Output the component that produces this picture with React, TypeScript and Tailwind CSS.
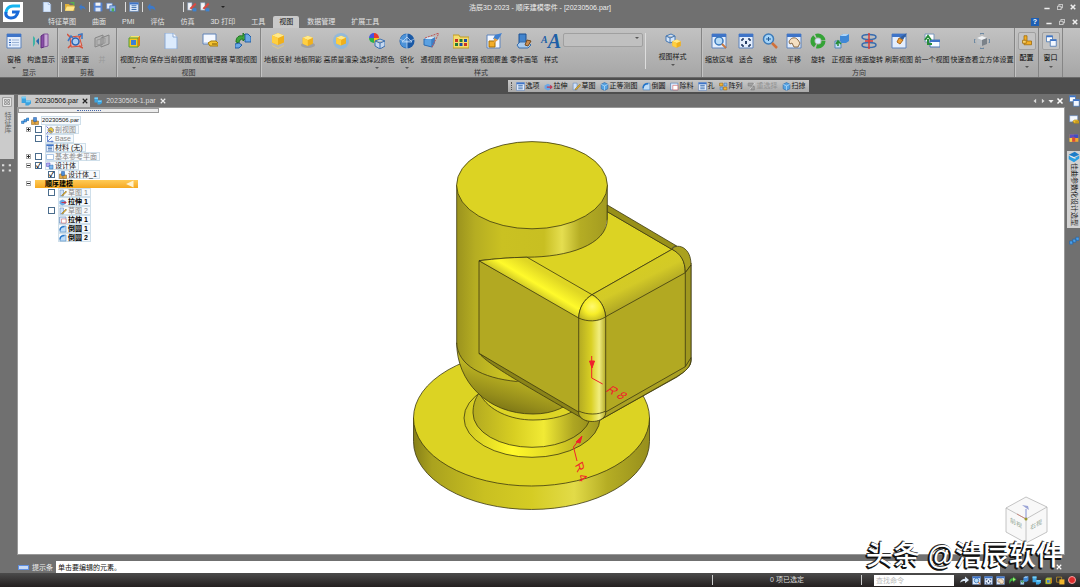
import { useState } from 'react'
import type { ReactNode } from 'react'

const Svg = ({ children, className = 'size-4' }: { children: ReactNode; className?: string }) => (
  <svg className={`${className} shrink-0`} viewBox="0 0 16 16" fill="none" aria-hidden="true">
    {children}
  </svg>
)

const Win = ({ children }: { children?: ReactNode }) => (
  <>
    <path d="M1 1h14v14H1z" fill="#e4eefc" stroke="#5d83bd" />
    <path d="M1 1h14v3H1z" fill="#3e74c8" />
    {children}
  </>
)

const Gold = () => (
  <>
    <path d="M8 2l6 2.500v7L8 14l-6-2.500v-7z" fill="#f0b01c" />
    <path d="M8 2l6 2.500L8 7 2 4.500z" fill="#ffe98a" />
    <path d="M2 4.500L8 7v7l-6-2.500z" fill="#ffcf40" />
  </>
)

const art: Record<string, ReactNode> = {
  pane: <Win><path d="M3 7h2M3 9.500h2M3 12h2" stroke="#2f62b5" /><path d="M6 7h7M6 9.500h7M6 12h7" stroke="#9db4d6" /></Win>,
  structure: <><path d="M0 3l2 2v6l-2 3z" fill="#41b4a5" /><path d="M3 8l3-3v7z" fill="#2a67ad" /><path d="M8 3l3-2v13l-3 1z" fill="#8a4ba8" stroke="#5d2c7b" /><path d="M11 1h4v12l-4 1z" fill="#c9a8d8" stroke="#81539a" /></>,
  plane: <><path d="M3 4l9-1 3 10-11 1z" fill="#eab0a4" stroke="#d4513c" /><path d="M0 1l4 4M15 1l-3 4M1 15l3-3M16 15l-4-2" stroke="#d4513c" strokeWidth="1.500" /><circle cx="8.500" cy="8.500" r="3.500" fill="#a9ccf2" stroke="#2864b4" strokeWidth="1.500" /><path d="M1 8l3-5 2 2M11 2l4-1v5" stroke="#3a79c6" strokeWidth="1.500" /></>,
  clip: <><path d="M1 5l8-3v9l-8 3zM7 5l8-3v9l-8 3z" fill="#b5b5b5" stroke="#858585" /><path d="M3 7l8-2v5l-8 2z" stroke="#999" /></>,
  orient: <><path d="M3 5l2-2h9v9l-2 2H3z" fill="#4b8b35" /><path d="M3 5l2-2h9l-2 2z" fill="#f7e46a" /><path d="M3 5h9v9H3z" fill="#f9c61f" stroke="#4e9c3b" /><path d="M5 7h5v5H5z" fill="#3c80d8" /><path d="M12 5l2-2v9l-2 2z" fill="#dd7d16" /></>,
  save: <><path d="M2 0h8l4 4v12H2z" fill="#dcebfd" stroke="#8aa9d4" /><path d="M10 0v4h4" fill="#fff" stroke="#8aa9d4" /></>,
  manager: <><path d="M1 1h13v10H1z" fill="#f4f8ff" stroke="#5f82b8" /><path d="M2 10h11" stroke="#a6bfe5" /><path d="M6 10l3-2h5l2 2v3H8z" fill="#f4c432" stroke="#a57a0c" /><path d="M10 11h5" stroke="#7a5708" /></>,
  sketch: <><path d="M1 9c0-5 3-7 7-6V0l4 4-4 4V6C6 6 4 7 4 10z" fill="#3ea53b" stroke="#1e7423" /><path d="M0 11l4-1 3 2-3 3H0zM10 1h3l3 3v5h-6z" fill="#6aa8e6" stroke="#235fa5" /></>,
  reflect: <><g transform="translate(0 -2)"><Gold /></g><path d="M2 12l6 3 6-3v1l-6 3-6-3z" fill="#e9cf7c" opacity=".7" /></>,
  shadow: <><ellipse cx="8" cy="12" rx="7" ry="3" fill="#8f8f8f" opacity=".6" /><g transform="translate(1 1) scale(.85)"><Gold /></g></>,
  render: <><circle cx="8" cy="8" r="8" fill="#80b7e5" opacity=".7" /><g transform="translate(1.500 1) scale(.82)"><Gold /></g></>,
  edge: <><path d="M5 5A5 5 0 0 1 5 0z" fill="#4452e0" /><path d="M5 5V0A5 5 0 0 1 10 5z" fill="#e83a2d" /><path d="M5 5H0A5 5 0 0 1 5 0z" fill="#4452e0" /><path d="M5 5h5A5 5 0 0 1 5 10z" fill="#f4c322" /><path d="M5 5v5A5 5 0 0 1 0 5z" fill="#2bb44a" /><path d="M6 8l5-2 5 2v5l-5 3-5-3zM6 8l5 2 5-2M11 10v6" fill="#c5d7ee" stroke="#3b6fb0" /></>,
  sharpen: <><circle cx="8" cy="8" r="7.500" fill="#1b5aa6" /><path d="M8 1a7 7 0 0 0 0 14z" fill="#4d93d8" /><path d="M8 0v16M1 6c4 3 10 3 14 0M8 4L3 9h10z" stroke="#cfe3f9" strokeWidth=".7" /></>,
  perspective: <><path d="M1 6l8-1v9l-8-2z" fill="#5ba1e2" stroke="#2e6cb1" /><path d="M1 6l4-2h7l-3 2z" fill="#cfe6fb" /><path d="M9 6l3-2v6l-3 5z" fill="#3d7dc4" /><path d="M2 5L16 0M9 14L16 0" stroke="#bf5555" strokeDasharray="2 1" /></>,
  colors: <><path d="M0 2h6l1 2h9v11H0z" fill="#f6dd6c" stroke="#c09c22" /><path d="M2 6h3v3H2zM11 10h3v3h-3z" fill="#c93224" /><path d="M6.500 6h3v3h-3zM2 10h3v3H2z" fill="#247b33" /><path d="M11 6h3v3h-3zM6.500 10h3v3h-3z" fill="#1e4ca0" /></>,
  override: <><path d="M1 2h13v13H1z" fill="#f4f8ff" stroke="#5d83bd" /><path d="M3 8h6v6H3z" fill="#f3ae29" stroke="#a36f0a" /><path d="M16 0l-4 7-5-1 2-4z" fill="#3e7fd0" /><path d="M8 5l4 2-4 3z" fill="#e7a03c" /></>,
  painter: <><path d="M3 1h7v9H3z" fill="#4284cd" stroke="#1d5092" /><path d="M1 12l3-3h8l3 3-3 3H3z" fill="#a9cbef" stroke="#396fac" /><path d="M11 7l4 1-3 5-3-1z" fill="#c98e55" stroke="#744b20" /></>,
  zoomArea: <Win><circle cx="8" cy="8" r="4" fill="#b7dbf7" stroke="#3977bb" strokeWidth="1.500" /><path d="M11 11l4 4" stroke="#c87942" strokeWidth="2" /></Win>,
  fit: <Win><path d="M4 6h2M4 6v2M12 6h-2M12 6v2M4 13h2M4 13v-2M12 13h-2M12 13v-2" stroke="#243c66" strokeWidth="1.500" /><path d="M7 8h2v3H7z" fill="#243c66" /></Win>,
  zoom: <><circle cx="6.500" cy="6" r="5" fill="#a4d3f7" stroke="#3c7bb9" strokeWidth="1.500" /><path d="M4 6h5M6.500 4v4" stroke="#225a95" /><path d="M10 10l5 5" stroke="#d0703a" strokeWidth="2.500" /></>,
  pan: <Win><path d="M3 9c1-4 6-6 9-2l2 3-2 4H8l-2-4-2 1z" fill="#f4dfc2" stroke="#8a6a47" /></Win>,
  rotate: <><circle cx="8" cy="8" r="5.500" stroke="#34a336" strokeWidth="4" strokeDasharray="10 1.500" /><circle cx="8" cy="8" r="2.500" fill="#d7e8f8" /></>,
  front: <><path d="M6 3l3-2h6v7l-3 2H6z" fill="#3f88d6" /><path d="M6 3l3-2h6l-3 2z" fill="#add4f8" /><path d="M1 8h6v7H1z" fill="#c5def6" stroke="#5387bb" /><path d="M4 13V9M2 11l2-3 3 3" stroke="#238b35" strokeWidth="1.500" /></>,
  spin: <><ellipse cx="8" cy="4" rx="7" ry="2.500" stroke="#396cae" strokeWidth="1.500" /><ellipse cx="8" cy="12" rx="7" ry="2.500" stroke="#396cae" strokeWidth="1.500" /><path d="M8 0v16M4 8h8" stroke="#d93d3a" strokeWidth="1.500" /></>,
  refresh: <Win><path d="M16 0l-4 7-4-2z" fill="#325f9f" /><path d="M8 5l4 2-3 4-3-2z" fill="#efa43b" stroke="#a9661a" /></Win>,
  previous: <><path d="M1 1h9v8H1z" fill="#fff" stroke="#7896bb" /><path d="M6 7h10v7H6z" fill="#f6faff" stroke="#4b76b3" /><path d="M6 7h10v2H6z" fill="#3e74c8" /><path d="M8 11H4V6M1 7l3-4 3 4" stroke="#268c3a" strokeWidth="2" /></>,
  quick: <><path d="M3 5l5-2 5 2v6l-5 2-5-2z" fill="#b9bec3" /><path d="M3 5l5-2 5 2-5 2z" fill="#f0f2f4" /><path d="M8 7l5-2v6l-5 2z" fill="#7b8289" /><path d="M6 1l2-1 2 1M6 15l2 1 2-1M1 6L0 8l1 2M15 6l1 2-1 2" stroke="#557a9b" /></>,
  viewStyle: <><path d="M1 3l5-2 4 2v5l-5 2-4-2zM1 3l4 2 5-2M5 5v5" fill="#d3e5fa" stroke="#4577b2" /><g transform="translate(6 5) scale(.7)"><Gold /></g></>,
  config: <><path d="M4 1h4v7h6v5H4z" fill="#f4ae24" stroke="#9b6809" /><path d="M2 7h5v4H2z" fill="#fbd165" stroke="#9b6809" /></>,
  window: <><path d="M2 1h8v8H2z" fill="#fff" stroke="#3f6fae" /><path d="M7 6h8v9H7z" fill="#f2f7ff" stroke="#3f6fae" /><path d="M2 1h8v2H2zM7 6h8v2H7z" fill="#3e74c8" /></>,
  part: <><path d="M1 1h7v6h8v5l-4 3H7v-4H1z" fill="#3ba3e0" /><path d="M1 1h7v3H1zM8 7h8l-2 3H8z" fill="#77cdf5" /></>,
  folder: <><path d="M0 3h6l2 2h7v9H0z" fill="#e0b13a" /><path d="M3 7h13l-3 7H0z" fill="#ffe58a" /><path d="M9 1h5v4" stroke="#55b24b" strokeWidth="2" /></>,
  disk: <><path d="M1 1h14v14H1z" fill="#5582d0" /><path d="M4 1h8v5H4z" fill="#f4f4f4" /><path d="M4 9h8v6H4z" fill="#dde7f6" /></>,
  disks: <><path d="M1 2h9v9H1z" fill="#e9eef6" stroke="#5582d0" /><path d="M6 6h9v9H6z" fill="#8fb4e6" stroke="#3a66ad" /><path d="M9 10h4v5H9z" fill="#4fae52" /></>,
  list: <Win><path d="M4 6h8M4 9h8M4 12h8" stroke="#3569ac" strokeWidth="1.500" /></Win>,
  undo: <path d="M2 8l5-6v4c6 0 8 3 8 8-2-3-4-4-8-3v4z" fill="#3c79c9" />,
  tool: <><path d="M1 1h7v12H1z" fill="#f5f7fa" stroke="#7f95b2" /><path d="M4 10l9-9 2 3-8 8z" fill="#d84a43" /><path d="M9 10h6v5H9z" fill="#3c82d0" /></>,
  solid: <><path d="M2 4l6-3 6 3v8l-6 3-6-3z" fill="#55a3e2" stroke="#2562a5" /><path d="M2 4l6 3 6-3M8 7v8" stroke="#d7ecff" /></>,
  round: <><path d="M2 14V9c0-4 3-7 8-7h4v12z" fill="#bedcf7" stroke="#3b78b7" /><path d="M2 11c0-5 4-8 9-8" stroke="#1f72c9" strokeWidth="2.500" /></>,
  extrude: <><path d="M1 6l6-3 6 3v6l-6 3-6-3z" fill="#6aa8e6" /><path d="M5 9h9M11 6l3 3-3 3" stroke="#c33650" strokeWidth="2" /></>,
  pencil: <><path d="M2 2h7v12H2z" fill="#cfe2fb" stroke="#5b82b5" /><path d="M5 13l9-9 1 2-8 8z" fill="#e9b52f" stroke="#83631a" /></>,
  section: <><path d="M1 1l4 4M1 15l4-4" stroke="#7a6fd0" strokeWidth="2" /><path d="M4 6l6-4 5 4v5l-5 4-6-4z" fill="#e5c53a" stroke="#5a69b0" /><path d="M6 8l6 4" stroke="#5a69b0" strokeWidth="2" /></>,
  cut: <><path d="M1 2h13v12H1z" fill="#dbe9fb" stroke="#4571aa" /><path d="M5 6h9v8H5z" fill="#fff" stroke="#d35555" /></>,
  pattern: <><path d="M1 2h6v5H1zM8 9h6v5H8z" fill="#f1b337" stroke="#956410" /><path d="M9 2h5v5H9zM2 9h4v5H2z" fill="#8fbdec" stroke="#3f72ad" /></>,
  copies: <><path d="M1 2h9v9H1z" fill="#333" stroke="#f0b52b" /><path d="M6 6h9v9H6z" fill="#f0b52b" /></>,
  blocks: <><path d="M1 8h5v5H1zM6 5h5v5H6zM11 2h5v5h-5z" fill="#4da0e6" stroke="#1f62a8" /></>,
  grey: <><path d="M2 2h9v5H2zM7 8h6v6H7z" fill="#a0a0a0" stroke="#777" /><path d="M14 2l-9 11" stroke="#eee" /></>,
  arrow: <path d="M0 12c1-5 5-7 9-7V1l7 6-7 6V9C5 9 2 10 0 12z" fill="#dce9f8" />,
  green: <><path d="M3 14C1 7 5 3 9 4V1l6 5-6 5V8C6 8 4 10 3 14z" fill="#3cb240" /><path d="M9 3v6l4-3z" fill="#b8ec76" /></>,
  swatch: <><path d="M1 2h14v12H1z" fill="#f0a830" /><path d="M1 2h7v6H1z" fill="#5d50bf" /><path d="M8 2h7v6H8z" fill="#3f4fc4" /><path d="M4 7h6v7H4z" fill="#db4c3a" /><path d="M1 8h4v6H1z" fill="#f4d04a" /></>,
  swirl: <><path d="M1 5l8-4 6 4-7 3z" fill="#1d7cc8" /><path d="M1 6l7 4 7-4v4l-7 5-7-4z" fill="#2b9fe3" /><path d="M3 7l7 3" stroke="#fff" /></>,
  axes: <path d="M3 1v12h12M3 13L12 4M1 3h4M12 11v4" stroke="#4168c4" strokeWidth="1.500" />,
  refPlane: <path d="M1 3h14v10H1z" fill="#fff" stroke="#90b4dc" strokeWidth="1.500" />,
  bodies: <><path d="M1 2h7v7H1z" fill="#b5b0f0" stroke="#5146bd" /><path d="M6 7l8-1v8H7z" fill="#79b8ee" stroke="#2562a5" /></>,
  body: <><path d="M1 6h6v9H1zM8 8h7v7H8z" fill="#e4a742" stroke="#8d5e13" /><path d="M5 1h6v8H5z" fill="#4f8fd6" stroke="#2556a0" /></>,
}

const Icon = ({ name, className }: { name: string; className?: string }) => <Svg className={className}>{art[name]}</Svg>

const Caret = ({ className = 'text-[#555]' }: { className?: string }) => (
  <svg className={`h-[3px] w-1 ${className}`} viewBox="0 0 4 3" fill="currentColor" aria-hidden="true">
    <path d="M0 0h4L2 2z" />
  </svg>
)

interface Command {
  label: string
  icon: string
  width: string
  menu?: boolean
  off?: boolean
  tight?: boolean
}

const RibbonButton = ({ label, icon, width, menu, off, tight }: Command) => (
  <button className={`flex flex-col items-center ${width}`} disabled={off}>
    {icon === 'style' ? (
      <span className="h-4 font-['Liberation_Serif',serif] text-xl/4 font-bold italic text-[#1d5fa6]">
        <sup className="text-[10px]">A</sup>A
      </span>
    ) : (
      <Icon name={icon} />
    )}
    <span className={`whitespace-nowrap text-[7px]/[8px] ${tight ? 'mt-1' : 'mt-[7px]'} ${off ? 'text-[#999]' : 'text-[#181818]'}`}>{label}</span>
    {menu && <Caret className="mt-[3px] text-[#555]" />}
  </button>
)

const RibbonGroup = ({ title, items, children, pad = 'px-0.5' }: { title: string; items: Command[]; children?: ReactNode; pad?: string }) => (
  <section className={`flex shrink-0 flex-col border-r border-[#858585] shadow-[1px_0_0_#c4c4c4] ${pad}`}>
    <div className="flex h-[41px] items-start pt-[5px]">
      {items.map((item) => (
        <RibbonButton key={item.label} {...item} />
      ))}
      {children}
    </div>
    <h2 className="text-center text-[7px]/[8px] text-[#333]">{title}</h2>
  </section>
)

const display: Command[] = [
  { label: '窗格', icon: 'pane', width: 'w-6', menu: true },
  { label: '构造显示', icon: 'structure', width: 'w-[30px]' },
]
const clipping: Command[] = [
  { label: '设置平面', icon: 'plane', width: 'w-[30px]' },
  { label: '并', icon: 'clip', width: 'w-6', off: true },
]
const views: Command[] = [
  { label: '视图方向', icon: 'orient', width: 'w-[30px]', menu: true },
  { label: '保存当前视图', icon: 'save', width: 'w-[43px]' },
  { label: '视图管理器', icon: 'manager', width: 'w-9' },
  { label: '草图视图', icon: 'sketch', width: 'w-[30px]' },
]
const styles: Command[] = [
  { label: '地板反射', icon: 'reflect', width: 'w-[30px]' },
  { label: '地板阴影', icon: 'shadow', width: 'w-[30px]' },
  { label: '高质量渲染', icon: 'render', width: 'w-9' },
  { label: '选择边颜色', icon: 'edge', width: 'w-9', menu: true },
  { label: '锐化', icon: 'sharpen', width: 'w-6', menu: true },
  { label: '透视图', icon: 'perspective', width: 'w-6' },
  { label: '颜色管理器', icon: 'colors', width: 'w-9' },
  { label: '视图覆盖', icon: 'override', width: 'w-[30px]' },
  { label: '零件画笔', icon: 'painter', width: 'w-[30px]' },
  { label: '样式', icon: 'style', width: 'w-6' },
]
const orientation: Command[] = [
  { label: '缩放区域', icon: 'zoomArea', width: 'w-[30px]' },
  { label: '适合', icon: 'fit', width: 'w-6' },
  { label: '缩放', icon: 'zoom', width: 'w-6' },
  { label: '平移', icon: 'pan', width: 'w-6' },
  { label: '旋转', icon: 'rotate', width: 'w-6' },
  { label: '正视面', icon: 'front', width: 'w-6' },
  { label: '绕面旋转', icon: 'spin', width: 'w-[30px]' },
  { label: '刷新视图', icon: 'refresh', width: 'w-[30px]' },
  { label: '前一个视图', icon: 'previous', width: 'w-9' },
  { label: '快速查看立方体设置', icon: 'quick', width: 'w-16' },
]

const Ribbon = () => (
  <div className="flex h-[50px] shrink-0 overflow-hidden border-b border-[#6a6a6a] bg-linear-to-b from-[#c2c2c2] to-[#a6a6a6]">
    <RibbonGroup title="显示" items={display} pad="pl-0.5 pr-px" />
    <RibbonGroup title="剪裁" items={clipping} />
    <RibbonGroup title="视图" items={views} />
    <RibbonGroup title="样式" items={styles} pad="px-0.5">
      <div className="relative h-3.5 w-20">
        <select aria-label="样式" className="block size-full appearance-none rounded-xs border border-[#a0a0a0] bg-[#c0c0c0] text-[7px]" />
        <Caret className="pointer-events-none absolute top-1 right-1 text-[#555]" />
      </div>
      <div className="ml-0.5 flex h-9 w-[54px] justify-center border-l border-[#ddd]">
        <RibbonButton label="视图样式" icon="viewStyle" width="w-[30px]" menu tight />
      </div>
    </RibbonGroup>
    <RibbonGroup title="方向" items={orientation} pad="pl-0.5 pr-0" />
    {[
      { label: '配置', icon: 'config' },
      { label: '窗口', icon: 'window' },
    ].map((b) => (
      <button key={b.label} className="flex w-6 shrink-0 flex-col items-center border-r border-[#858585] pt-1 text-[7px]/[8px]">
        <span className="flex size-[18px] items-center justify-center rounded-xs border border-[#a0a0a0] bg-[#c4c4c4]">
          <Icon name={b.icon} className="size-3" />
        </span>
        <span className="mt-1">{b.label}</span>
        <Caret className="mt-1 text-[#555]" />
      </button>
    ))}
  </div>
)

const WindowButtons = () => (
  <>
    <button aria-label="最小化"><Svg className="size-1.5"><path d="M1 12h14" stroke="#eee" strokeWidth="4" /></Svg></button>
    <button aria-label="还原"><Svg className="size-1.5"><path d="M5 5V1h10v9h-4M1 6h10v9H1z" stroke="#eee" strokeWidth="2" /></Svg></button>
    <button aria-label="关闭"><Svg className="size-1.5"><path d="M2 2l12 12M14 2L2 14" stroke="#eee" strokeWidth="4" /></Svg></button>
  </>
)

const TitleBar = () => (
  <header className="relative flex h-3.5 items-center text-[#eee]">
    <div className="flex h-3.5 items-center gap-[3px] pl-[42px]">
      <button aria-label="新建"><Icon name="save" className="size-2.5" /></button>
      <span className="ml-1.5 h-2.5 w-px bg-[#ddd]" />
      <button aria-label="打开"><Icon name="folder" className="size-2.5" /></button>
      <button aria-label="关闭文件"><Icon name="undo" className="size-2" /></button>
      <span className="h-2.5 w-px bg-[#ddd]" />
      <button aria-label="保存"><Icon name="disk" className="size-2.5" /></button>
      <button aria-label="另存为"><Icon name="disks" className="size-2.5" /></button>
      <span className="ml-1.5 h-2.5 w-px bg-[#ddd]" />
      <button aria-label="属性"><Icon name="list" className="size-2.5" /></button>
      <span className="h-2.5 w-px bg-[#ddd]" />
      <button aria-label="撤销"><Icon name="undo" className="size-2.5" /></button>
      <span className="ml-6 h-2.5 w-px bg-[#ddd]" />
      <button aria-label="测量"><Icon name="tool" className="size-2.5" /></button>
      <button aria-label="检查"><Icon name="tool" className="size-2.5" /></button>
      <button aria-label="更多" className="ml-2"><Caret className="text-[#222]" /></button>
    </div>
    <h1 className="pointer-events-none absolute inset-x-0 top-1 text-center text-[7px]/[8px]">浩辰3D 2023 - 顺序建模零件 - [20230506.par]</h1>
    <div className="relative ml-auto flex items-center gap-[7px] pr-1">
      <WindowButtons />
    </div>
  </header>
)

const ribbonTabs = ['特征草图', '曲面', 'PMI', '评估', '仿真', '3D 打印', '工具', '视图', '数据管理', '扩展工具']

const RibbonTabs = () => {
  const [active, setActive] = useState('视图')
  return (
    <nav className="flex h-3.5 items-end pl-10 text-[7px]/[8px] text-[#e4e4e4]">
      {ribbonTabs.map((tab) => (
        <button
          key={tab}
          onClick={() => setActive(tab)}
          className={
            tab === active
              ? 'h-3 rounded-t-xs bg-[#c9c9c9] px-1.5 text-[#111]'
              : 'h-3 px-2'
          }
        >
          {tab}
        </button>
      ))}
      <div className="ml-auto flex items-center gap-[7px] pr-0.5 pb-0.5">
        <button aria-label="帮助" className="size-2 bg-[#1d5fb4] text-[7px]/[8px] font-bold text-white">?</button>
        <WindowButtons />
      </div>
    </nav>
  )
}

const quickCommands = [
  { label: '选项', icon: 'list' },
  { label: '拉伸', icon: 'extrude' },
  { label: '草图', icon: 'pencil' },
  { label: '正等测图', icon: 'solid' },
  { label: '倒圆', icon: 'round' },
  { label: '除料', icon: 'cut' },
  { label: '孔', icon: 'list' },
  { label: '阵列', icon: 'pattern' },
  { label: '重选择', icon: 'grey', off: true },
  { label: '扫掠', icon: 'solid' },
]

const QuickBar = () => (
  <div className="flex h-4 bg-[#4e4e4e] pt-0.5 pl-[47%]">
    <div className="flex h-3 items-center gap-1 bg-linear-to-b from-[#c8c8c8] to-[#a9a9a9] px-[3px]">
      <span className="h-2 border-l border-dotted border-[#555]" />
      {quickCommands.map((c) => (
        <button key={c.label} disabled={c.off} className={`flex items-center gap-px text-[7px]/[8px] whitespace-nowrap ${c.off ? 'text-[#929292]' : 'text-[#111]'}`}>
          <Icon name={c.icon} className="size-[9px]" />
          {c.label}
        </button>
      ))}
    </div>
  </div>
)

const DocumentTabs = () => (
  <div className="flex h-[13px] items-end pl-[18px] text-[7px]/[8px]">
    <div className="flex h-3 items-center gap-1 bg-[#c9c9c9] pr-0.5 pl-[3px] text-[#111]">
      <Icon name="part" className="size-2.5" />
      <button>20230506.par</button>
      <button aria-label="关闭 20230506.par"><Svg className="size-1.5"><path d="M2 2l12 12M14 2L2 14" stroke="#222" strokeWidth="3" /></Svg></button>
    </div>
    <div className="flex h-3 items-center gap-1 px-1 text-[#ddd]">
      <Icon name="part" className="size-2" />
      <button>20230506-1.par</button>
      <button aria-label="关闭 20230506-1.par"><Svg className="size-1.5"><path d="M2 2l12 12M14 2L2 14" stroke="#eee" strokeWidth="3" /></Svg></button>
    </div>
    <div className="ml-auto flex h-3 items-center gap-0.5 pr-4">
      <button aria-label="上一个"><Svg className="size-1.5"><path d="M11 2L4 8l7 6z" fill="#ddd" /></Svg></button>
      <button aria-label="下一个"><Svg className="size-1.5"><path d="M5 2l7 6-7 6z" fill="#ddd" /></Svg></button>
      <button aria-label="文档列表"><Svg className="size-1.5"><path d="M1 5h14l-7 8z" fill="#eee" /></Svg></button>
      <button aria-label="关闭文档"><Svg className="size-2"><path d="M3 3l10 10M13 3L3 13" stroke="#fff" strokeWidth="3" /></Svg></button>
    </div>
  </div>
)

interface Node {
  label: string
  icon: string
  level: number
  expander?: '+' | '-'
  checkable?: boolean
  checked?: boolean
  tone?: 'muted' | 'bold'
}

const nodes: Node[] = [
  { label: '剖视图', icon: 'section', level: 1, expander: '+', checkable: true, tone: 'muted' },
  { label: 'Base', icon: 'axes', level: 1, checkable: true, tone: 'muted' },
  { label: '材料 (无)', icon: 'list', level: 1 },
  { label: '基本参考平面', icon: 'refPlane', level: 1, expander: '+', checkable: true, tone: 'muted' },
  { label: '设计体', icon: 'bodies', level: 1, expander: '-', checkable: true, checked: true },
  { label: '设计体_1', icon: 'body', level: 2, checkable: true, checked: true },
  { label: '顺序建模', icon: 'mode', level: 1, expander: '-' },
  { label: '草图 1', icon: 'pencil', level: 2, checkable: true, tone: 'muted' },
  { label: '拉伸 1', icon: 'extrude', level: 2, tone: 'bold' },
  { label: '草图 2', icon: 'pencil', level: 2, checkable: true, tone: 'muted' },
  { label: '拉伸 1', icon: 'cut', level: 2, tone: 'bold' },
  { label: '倒圆 1', icon: 'round', level: 2, tone: 'bold' },
  { label: '倒圆 2', icon: 'round', level: 2, tone: 'bold' },
]

const TreeRow = ({ node }: { node: Node }) => {
  const [checked, setChecked] = useState(!!node.checked)
  const [open, setOpen] = useState(node.expander === '-')
  const tone = node.tone === 'muted' ? 'text-[#888]' : node.tone === 'bold' ? 'font-bold text-black' : 'text-[#111]'
  const expander = node.expander && (
    <button
      aria-label={node.label}
      aria-expanded={open}
      onClick={() => setOpen(!open)}
      className="flex size-[5px] items-center justify-center border border-[#aaa] bg-white"
    >
      <Svg className="size-[3px]"><path d={open ? 'M0 8h16' : 'M0 8h16M8 0v16'} stroke="#222" strokeWidth="5" /></Svg>
    </button>
  )

  if (node.icon === 'mode') {
    return (
      <li className="flex h-[9px] items-center gap-1">
        {expander}
        <span className="flex h-2 flex-1 items-center justify-between bg-linear-to-b from-[#ffcb55] to-[#f5a81c] pr-1 pl-2.5 text-[7px]/[8px] font-bold text-black">
          {node.label}
          <Svg className="size-2"><path d="M15 1v14L0 8z" fill="#fff3d0" /></Svg>
        </span>
      </li>
    )
  }

  return (
    <li className={`flex h-[9px] items-center ${node.level === 2 ? 'pl-[13px]' : ''}`}>
      <span className="w-[9px] shrink-0">{expander}</span>
      <label className="flex items-center">
        <span className="flex w-2.5 shrink-0">
          {node.checkable && (
            <input
              type="checkbox"
              checked={checked}
              onChange={() => setChecked(!checked)}
              className="flex size-[7px] appearance-none items-center justify-center border border-[#4b6d8d] bg-white text-[7px]/[5px] font-bold text-black checked:before:content-['✓']"
            />
          )}
        </span>
        <span className={`flex h-[9px] items-center gap-px border border-[#cfdfea] bg-[#f6f9fc] pr-0.5 text-[7px]/[7px] whitespace-nowrap ${tone}`}>
          <Icon name={node.icon} className="size-2" />
          {node.label}
        </span>
      </label>
    </li>
  )
}

const PathFinder = () => (
  <aside className="absolute top-0 left-0 w-[141px]">
    <div className="flex h-[5px] items-center justify-center border border-[#999] bg-[#ececec]">
      <span className="w-6 border-t border-dotted border-[#4466aa]" />
    </div>
    <div className="pt-[3px] pl-[3px]">
      <div className="flex h-[9px] w-fit items-center gap-0.5 text-[6px]/[8px] text-[#111]">
        <Icon name="blocks" className="size-2" />
        <Icon name="body" className="size-2" />
        <span className="border border-[#cfdfea] bg-[#f6f9fc] pr-px leading-[7px]">20230506.par</span>
      </div>
      <ul className="ml-[5px] w-[112px]">
        {nodes.map((node, i) => (
          <TreeRow key={i} node={node} />
        ))}
      </ul>
    </div>
  </aside>
)

const Model = () => (
  <svg className="h-[386px] w-[308px]" viewBox="387 138 308 386" fill="none" stroke="#3c3810" strokeWidth=".8" strokeLinejoin="round" role="img" aria-label="零件模型">
    <defs>
      <linearGradient id="flange" x1="413" x2="650" y1="0" y2="0" gradientUnits="userSpaceOnUse">
        <stop offset="0" stopColor="#857e18" />
        <stop offset=".08" stopColor="#aaa21e" />
        <stop offset=".3" stopColor="#c9c021" />
        <stop offset=".5" stopColor="#d5cc24" />
        <stop offset=".68" stopColor="#e2db48" />
        <stop offset=".82" stopColor="#b5ad24" />
        <stop offset="1" stopColor="#968e1c" />
      </linearGradient>
      <linearGradient id="shaft" x1="457" x2="607" y1="0" y2="0" gradientUnits="userSpaceOnUse">
        <stop offset="0" stopColor="#9b931e" />
        <stop offset=".12" stopColor="#b5ad22" />
        <stop offset=".3" stopColor="#cac122" />
        <stop offset=".58" stopColor="#c8bf22" />
        <stop offset=".7" stopColor="#e5de50" />
        <stop offset=".82" stopColor="#b5ad24" />
        <stop offset="1" stopColor="#a39b20" />
      </linearGradient>
      <linearGradient id="bowl" x1="500" x2="485" y1="368" y2="420" gradientUnits="userSpaceOnUse">
        <stop offset="0" stopColor="#c2b923" />
        <stop offset=".5" stopColor="#968e1b" />
        <stop offset="1" stopColor="#625d10" />
      </linearGradient>
      <linearGradient id="neck" x1="465" x2="600" y1="0" y2="0" gradientUnits="userSpaceOnUse">
        <stop offset="0" stopColor="#d0c722" />
        <stop offset=".35" stopColor="#fff82a" />
        <stop offset=".65" stopColor="#e0d725" />
        <stop offset="1" stopColor="#9d9520" />
      </linearGradient>
      <linearGradient id="cone" x1="473" x2="591" y1="0" y2="0" gradientUnits="userSpaceOnUse">
        <stop offset="0" stopColor="#b3aa20" />
        <stop offset=".35" stopColor="#d8cf22" />
        <stop offset=".6" stopColor="#f1ea35" />
        <stop offset=".85" stopColor="#aea622" />
        <stop offset="1" stopColor="#968e1c" />
      </linearGradient>
      <linearGradient id="leftFillet" x1="545" x2="530" y1="272" y2="297" gradientUnits="userSpaceOnUse">
        <stop offset="0" stopColor="#dfd624" />
        <stop offset=".5" stopColor="#fffa2b" />
        <stop offset="1" stopColor="#b3aa22" />
      </linearGradient>
      <linearGradient id="rightFillet" x1="632" x2="645" y1="270" y2="296" gradientUnits="userSpaceOnUse">
        <stop offset="0" stopColor="#d5cc23" />
        <stop offset=".45" stopColor="#d3ca27" />
        <stop offset="1" stopColor="#b1a824" />
      </linearGradient>
      <linearGradient id="frontFillet" x1="579" x2="606" y1="0" y2="0" gradientUnits="userSpaceOnUse">
        <stop offset="0" stopColor="#b4ab22" />
        <stop offset=".45" stopColor="#d9d024" />
        <stop offset=".75" stopColor="#f1ed7e" />
        <stop offset="1" stopColor="#b1a824" />
      </linearGradient>
      <radialGradient id="corner" cx=".5" cy=".45" r=".6">
        <stop offset="0" stopColor="#fff971" />
        <stop offset=".5" stopColor="#f7ee29" />
        <stop offset="1" stopColor="#c0b722" />
      </radialGradient>
    </defs>

    {/* Flange */}
    <path d="M413.500 418v23.500a118 68 0 0 0 236 0V418z" fill="url(#flange)" />
    <ellipse cx="531.500" cy="418" rx="118" ry="68" fill="#dcd323" />

    {/* Neck */}
    <ellipse cx="532" cy="418" rx="68" ry="39.300" fill="url(#neck)" />
    <path d="M473 413a59 34.300 0 0 0 118 0L578 393h-99c-4 6-6 12-6 20z" fill="url(#cone)" />
    <path d="M480 394c8 16 30 26 53 26 20 0 36-5 45-12l-8-14z" fill="#ded526" />

    {/* Shaft */}
    <path d="M456.700 343c0 38 30 71 76.300 71 20 0 36-7 44-20l-30-45z" fill="url(#bowl)" />
    <path d="M456.700 343c1 22 25 35 60 38.500l60-30-60-30z" fill="url(#shaft)" />
    <path d="M456.700 343V185h150.600v34l-30 132-60 0" fill="url(#shaft)" stroke="none" />
    <path d="M456.700 185v158M607.300 185v35" />
    <ellipse cx="532" cy="185.200" rx="75.400" ry="43.600" fill="#dcd323" />

    {/* Block */}
    <path d="M479 353.300c10 11 30 23 108 67.700l5-5-12-10z" fill="#8a8318" />
    <path d="M479 260.700v92.600l103 60.700V318z" fill="#b2a922" />
    <path d="M603 316l84-48 4-5v97c0 6-5 11-14 17l-77 43z" fill="#b2a922" />
    <path d="M479 260.700c17-2 31-3.200 48-3.500 40 0 80-12 80.300-38v-7.500L672 249.300l-80 45.400z" fill="#dcd323" />
    <path d="M607.300 205l69.400 41c-3 0-4 1-5 3.300l-64.400-37.600z" fill="#989019" />
    <path d="M479 260.700c17-2 31-3.200 48-3.500l65 37.500c-8 5-13 13-13.300 23.300z" fill="url(#leftFillet)" />
    <path d="M592 294.700l80-45.400c9 4 13 11 13.300 23.400l-79.600 44c-1-10-6-18-13.700-22z" fill="url(#rightFillet)" />
    <path d="M672 249.300c2-4 9-4 13-.3 5 4 6 11 6 16l-5.700 7.700c0-12-5-19-13.300-23.400z" fill="#aaa11f" />
    <path d="M685.300 272.700L691 265v95c0 5-2 7-5.700 9z" fill="#a0981f" />
    <path d="M605.700 412l79.600-45.300 5.700-9c0 10-5 13-14.300 19L600 420z" fill="#aaa122" />
    <path d="M578.700 318v96c3 10 24 10 27 0v-98z" fill="url(#frontFillet)" />
    <path d="M592 294.700c-8 5-13 13-13.300 23.300 8 4 20 4 27-1.300-1-10-6-18-13.700-22z" fill="url(#corner)" />
    <path d="M578.700 411c8 4 20 4 27 0" />

    {/* Dimensions */}
    <g stroke="#f0202c" fill="none" strokeWidth="1">
      <path d="M591.700 356v22l11 6M573.500 447l3.500 14M573.500 447l7-9" />
      <path d="M589.500 361h5l-2.500 7zM582 436l-6 6 4 1z" fill="#f0202c" />
    </g>
    <g fill="#f0202c" stroke="none" fontSize="12" fontFamily="'Liberation Sans', sans-serif">
      <text transform="translate(605 391) rotate(28) skewX(-25)">R 8</text>
      <text transform="translate(575 465) rotate(74) skewX(15)">R 4</text>
    </g>
  </svg>
)

const ViewCube = () => (
  <svg className="absolute right-4 bottom-2.5 h-[48px] w-[43px]" viewBox="0 0 43 48" stroke="#b5b5b5" strokeWidth=".8" role="img" aria-label="视图立方体">
    <path d="M1 12L21 1l21 10v25L21 47 1 36z" fill="#f8f8f8" />
    <path d="M1 12l20 11L42 11M21 23v24" fill="none" />
    <path d="M21 23V13" stroke="#6474c8" />
    <path d="M21 23l-9-5" stroke="#c9796a" />
    <circle cx="21" cy="23" r="1.500" fill="#9b9a30" stroke="none" />
    <path d="M17 9l6 1 1 4-3-2z" fill="#9ba4d6" stroke="none" />
    <g stroke="none" fill="#8da090" fontSize="6" fontFamily="'Liberation Sans', 'Noto Sans CJK SC', sans-serif">
      <text transform="translate(5 26) skewY(28)">前视</text>
      <text transform="translate(25 34) skewY(-28)">右视</text>
    </g>
  </svg>
)

const RightDock = () => (
  <aside className="flex w-[15px] shrink-0 flex-col items-center gap-2 pl-0.5">
    <button aria-label="零件库"><Icon name="window" className="size-3" /></button>
    <button aria-label="图层"><Icon name="manager" className="size-2.5" /></button>
    <button aria-label="颜色"><Icon name="swatch" className="size-2.5" /></button>
    <button className="flex w-[13px] flex-col items-center bg-[#d2d2d2] pb-0.5 text-[7px]/[12px] text-[#222]">
      <Icon name="swirl" className="size-3" />
      <span className="[writing-mode:vertical-rl] [text-orientation:sideways]">佳曲参数化设计选型</span>
    </button>
    <button aria-label="标准件"><Icon name="blocks" className="size-2.5" /></button>
  </aside>
)

const statusIcons = ['arrow', 'zoomArea', 'fit', 'pan', 'green', 'front', 'part', 'orient', 'copies']

const StatusArea = () => (
  <footer>
    <div className="flex h-3 items-stretch pl-[18px] text-[7px]/[13px]">
      <div className="flex items-center gap-[3px] text-[#eee]">
        <span className="h-[5px] w-[11px] border border-[#5f8fe0] bg-[#c8daf5]" />
        <span className="pr-[3px]">提示条</span>
      </div>
      <p className="flex-1 bg-white pl-0.5 text-[#111]">单击要编辑的元素。</p>
      <div className="flex w-20 items-center justify-end gap-1 pr-[18px]">
        <button aria-label="关闭提示条"><Svg className="size-1.5"><path d="M2 2l12 12M14 2L2 14" stroke="#fff" strokeWidth="3" /></Svg></button>
      </div>
    </div>
    <div className="flex h-3.5 items-center bg-linear-to-b from-[#4b4b4b] to-[#242020] text-[7px]/[8px] text-[#ddd]">
      <div className="flex-1" />
      <div className="h-2.5 w-[150px] border-x border-[#ccc] text-center leading-[10px]">0 项已选定</div>
      <input aria-label="查找命令" placeholder="查找命令" className="mx-3 h-[11px] w-20 bg-white px-0.5 text-[7px] text-black placeholder:text-[#bbb]" />
      <div className="-ml-1.5 flex items-center gap-[3px] pr-1">
        {statusIcons.map((name) => (
          <button key={name} aria-label={name}><Icon name={name} className="size-[9px]" /></button>
        ))}
        <button aria-label="录制" className="size-2 rounded-full border border-[#f3a0a0] bg-[#dd2b2b]" />
      </div>
    </div>
  </footer>
)

const App = () => (
  <div className="relative flex h-screen flex-col overflow-hidden bg-[#707070] font-['Liberation_Sans','Noto_Sans_CJK_SC',sans-serif]">
    <TitleBar />
    <RibbonTabs />
    <Ribbon />
    <QuickBar />
    <DocumentTabs />
    {/* Application logo */}
    <button aria-label="浩辰3D" className="absolute top-0.5 left-[3px] size-5 bg-white">
      <svg viewBox="0 0 20 20" fill="none">
        <path d="M17 4H10C5 4 3 8 3 11" stroke="#16b5f0" strokeWidth="3" />
        <path d="M3 10c-1 4 2 6 5 6 4 0 6-2 7-6H9" stroke="#1869d8" strokeWidth="3" />
      </svg>
    </button>

    <main className="flex min-h-0 flex-1">
      <aside className="flex w-[17px] shrink-0 flex-col items-start">
        <button className="-mt-3 flex h-16 w-3.5 flex-col items-center gap-[5px] bg-[#cbcbcb] pt-0.5 text-[7px]/[8px] text-[#666]">
          <Svg className="size-2.5"><path d="M1 1h14v14H1z" fill="#eee" stroke="#777" /><path d="M4 4h3v3H4zM9 4h3v3H9zM4 9h3v3H4zM9 9h3v3H9z" stroke="#666" /></Svg>
          <span className="[writing-mode:vertical-rl] [text-orientation:upright]">特征库</span>
        </button>
        <Svg className="mt-1 ml-0.5 size-3"><path d="M0 3h3M9 3h3M0 10h3M9 10h3" stroke="#ddd" strokeWidth="2.500" /></Svg>
      </aside>
      <div className="relative mb-1.5 flex flex-1 items-center justify-center border border-[#999] bg-white">
        <Model />
        <PathFinder />
        <ViewCube />
      </div>
      <div className="-mt-3 flex">
        <RightDock />
      </div>
    </main>
    <StatusArea />
    {/* Watermark */}
    <p className="pointer-events-none absolute right-[17px] bottom-3 text-[27px]/[38px] font-medium whitespace-nowrap text-white [text-shadow:-2px_1px_0_#111,-1px_2px_0_#111,-1px_-1px_0_#333]">
      头条 @浩辰软件
    </p>
  </div>
)

export default App
